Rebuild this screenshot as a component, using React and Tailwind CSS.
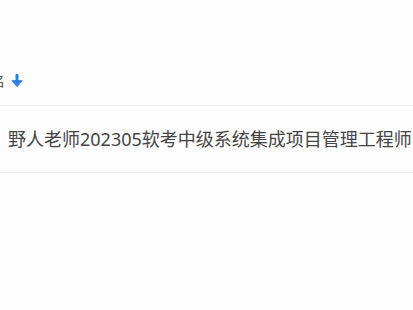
import React from 'react';

const rows = [
  { id: 1, name: '野人老师202305软考中级系统集成项目管理工程师' },
];

function FileTable() {
  return (
    <div className="w-full overflow-hidden">
      <div className="h-[62px]" />
      {/* header, scrolled a bit to the left */}
      <div className="flex items-center h-[36px] -ml-[9px] text-[14px] text-[#555]">
        <span>名</span>
        <svg className="ml-[6px]" width="12" height="15" viewBox="0 0 12 15">
          <rect x="4.5" y="1" width="3" height="9" rx="1" fill="#2d7fe0" />
          <path d="M0.8 7.6h10.4L6 13.6z" fill="#2d7fe0" strokeLinejoin="round" stroke="#2d7fe0" strokeWidth="0.8" />
        </svg>
      </div>
      <div className="h-[7px]" />
      <div className="border-t border-b border-[#f1f1f1]">
        {rows.map((row) => (
          <div key={row.id} className="flex items-center h-[66px] pl-[8px] whitespace-nowrap text-[18px] text-[#444]">
            {row.name}
          </div>
        ))}
      </div>
    </div>
  );
}

export default function App() {
  return (
    <div
      className="w-[413px] h-[310px] bg-[#fdfdfd]"
      style={{ fontFamily: '"Noto Sans", "Noto Sans CJK SC", sans-serif' }}
    >
      <FileTable />
    </div>
  );
}
